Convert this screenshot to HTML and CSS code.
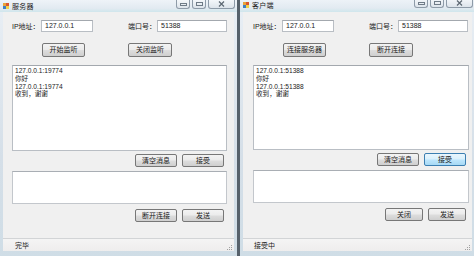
FILE: index.html
```html
<!doctype html>
<html lang="zh-CN">
<head>
  <meta charset="UTF-8">
  <title>服务器 / 客户端</title>
  <link rel="stylesheet" href="styles.css">
</head>
<body>
  <div class="desk">
    <section class="win win-server">
      <div class="titlebar">
        <svg class="app-icon" width="6" height="6" viewBox="0 0 6 6">
          <rect x="0" y="0" width="3" height="3" fill="#e8a33a"/>
          <rect x="3" y="0" width="3" height="3" fill="#d9552e"/>
          <rect x="0" y="3" width="3" height="3" fill="#3f7fc4"/>
          <rect x="3" y="3" width="3" height="3" fill="#f2d34b"/>
        </svg>
        <span class="title">服务器</span>
        <div class="caption">
          <span class="cap cap-min"><i></i></span>
          <span class="cap cap-max"><i></i></span>
          <span class="cap cap-close">
            <svg width="7" height="6" viewBox="0 0 7 6"><path d="M1 0.5 L6 5.5 M6 0.5 L1 5.5" stroke="#5d6873" stroke-width="1.2" fill="none"/></svg>
          </span>
        </div>
      </div>

      <div class="client">
        <div class="addr">
          <span class="lbl">IP地址：</span>
          <span class="field field-ip">127.0.0.1</span>
          <span class="lbl lbl-port">端口号：</span>
          <span class="field field-port">51388</span>
        </div>

        <div class="actions">
          <button class="btn">开始监听</button>
          <button class="btn btn-wide">关闭监听</button>
        </div>

        <div class="log">127.0.0.1:19774<br>你好<br>127.0.0.1:19774<br>收到，谢谢</div>

        <div class="tools">
          <button class="btn">清空消息</button>
          <button class="btn">接受</button>
        </div>

        <div class="msg"></div>

        <div class="tools tools-send">
          <button class="btn">断开连接</button>
          <button class="btn">发送</button>
        </div>

        <div class="status">
          <span>完毕</span>
          <svg class="grip" width="5" height="5" viewBox="0 0 5 5">
            <rect x="4" y="0" width="1" height="1" fill="#a0a0a0"/>
            <rect x="2" y="2" width="1" height="1" fill="#a0a0a0"/>
            <rect x="4" y="2" width="1" height="1" fill="#a0a0a0"/>
            <rect x="0" y="4" width="1" height="1" fill="#a0a0a0"/>
            <rect x="2" y="4" width="1" height="1" fill="#a0a0a0"/>
            <rect x="4" y="4" width="1" height="1" fill="#a0a0a0"/>
          </svg>
        </div>
      </div>
    </section>

    <section class="win win-client">
      <div class="titlebar">
        <svg class="app-icon" width="6" height="6" viewBox="0 0 6 6">
          <rect x="0" y="0" width="3" height="3" fill="#e8a33a"/>
          <rect x="3" y="0" width="3" height="3" fill="#d9552e"/>
          <rect x="0" y="3" width="3" height="3" fill="#3f7fc4"/>
          <rect x="3" y="3" width="3" height="3" fill="#f2d34b"/>
        </svg>
        <span class="title">客户端</span>
        <div class="caption">
          <span class="cap cap-min"><i></i></span>
          <span class="cap cap-max"><i></i></span>
          <span class="cap cap-close">
            <svg width="7" height="6" viewBox="0 0 7 6"><path d="M1 0.5 L6 5.5 M6 0.5 L1 5.5" stroke="#5d6873" stroke-width="1.2" fill="none"/></svg>
          </span>
        </div>
      </div>

      <div class="client">
        <div class="addr">
          <span class="lbl">IP地址：</span>
          <span class="field field-ip">127.0.0.1</span>
          <span class="lbl lbl-port">端口号：</span>
          <span class="field field-port">51388</span>
        </div>

        <div class="actions">
          <button class="btn">连接服务器</button>
          <button class="btn btn-wide">断开连接</button>
        </div>

        <div class="log">127.0.0.1:51388<br>你好<br>127.0.0.1:51388<br>收到，谢谢</div>

        <div class="tools">
          <button class="btn">清空消息</button>
          <button class="btn btn-focus">接受</button>
        </div>

        <div class="msg"></div>

        <div class="tools tools-send">
          <button class="btn btn-short">关闭</button>
          <button class="btn btn-short">发送</button>
        </div>

        <div class="status">
          <span>接受中</span>
          <svg class="grip" width="5" height="5" viewBox="0 0 5 5">
            <rect x="4" y="0" width="1" height="1" fill="#a0a0a0"/>
            <rect x="2" y="2" width="1" height="1" fill="#a0a0a0"/>
            <rect x="4" y="2" width="1" height="1" fill="#a0a0a0"/>
            <rect x="0" y="4" width="1" height="1" fill="#a0a0a0"/>
            <rect x="2" y="4" width="1" height="1" fill="#a0a0a0"/>
            <rect x="4" y="4" width="1" height="1" fill="#a0a0a0"/>
          </svg>
        </div>
      </div>
    </section>
  </div>
</body>
</html>
```

FILE: styles.css
```css
*{
  box-sizing: border-box;
}

html, body{
  margin: 0;
  padding: 0;
}

body{
  width: 474px;
  height: 256px;
  overflow: hidden;
  color: #1a1a1a;
  font-family: "Liberation Sans", "Noto Sans CJK SC", sans-serif;
  font-size: 7px;
  background: #56616b;
}

.desk{
  display: flex;
  gap: 3px;
  height: 256px;
}

/* window frame */

.win{
  display: flex;
  flex: none;
  flex-direction: column;
  width: 237px;
  height: 262px;
  padding: 0 3px;
  background: linear-gradient(#e9eff5, #d5dfe8 60%, #cfdde6);
}

.win-client{
  width: 235px;
  margin-top: -1px;
}

.titlebar{
  display: flex;
  align-items: center;
  height: 12px;
  margin: 0 -3px;
  padding-left: 3px;
  background: linear-gradient(#eef3f8, #e2eaf1 70%, #cfe6ec);
}

.win-client .titlebar{
  height: 13px;
}

.app-icon{
  flex: none;
  margin-top: -1px;
}

.title{
  margin-left: 3px;
  margin-top: -1px;
  color: #222;
  font-size: 7px;
  letter-spacing: .2px;
}

.caption{
  display: flex;
  align-self: flex-start;
  gap: 2px;
  margin-left: auto;
  margin-right: 2px;
}

.cap{
  display: flex;
  align-items: center;
  justify-content: center;
  width: 14px;
  height: 9px;
  border: 1px solid #8e9ba8;
  border-top: none;
  border-radius: 0 0 3px 3px;
  background: linear-gradient(#f4f7fa, #dde4eb);
}

.cap i{
  display: block;
  width: 7px;
  height: 4px;
  border: 1px solid #6f7b87;
}

.cap-min i{
  height: 3px;
  margin-top: 1px;
}

.cap-close{
  width: 27px;
}

/* client area */

.client{
  display: flex;
  flex: none;
  flex-direction: column;
  width: 231px;
  height: 239px;
  background: #f0f0f0;
}

.win-client .client{
  width: 229px;
  padding-left: 1px;
}

.addr{
  display: flex;
  align-items: center;
  height: 12px;
  margin-top: 8px;
  padding-left: 9px;
}

.lbl{
  flex: none;
  width: 29px;
  font-size: 7px;
}

.lbl-port{
  margin-left: 35px;
}

.field{
  flex: none;
  height: 12px;
  padding-left: 3px;
  font-size: 7px;
  line-height: 10px;
  background: #fff;
  border: 1px solid #b9bec4;
  border-top-color: #a3a8ae;
}

.field-ip{
  width: 52px;
}

.field-port{
  width: 70px;
}

.btn{
  flex: none;
  width: 43px;
  height: 14px;
  margin: 0;
  padding: 0;
  color: #1a1a1a;
  font-family: "Liberation Sans", "Noto Sans CJK SC", sans-serif;
  font-size: 7px;
  line-height: 12px;
  background: linear-gradient(#f3f3f3, #ebebeb 48%, #dddddd 52%, #cfcfcf);
  border: 1px solid #777;
  border-radius: 2px;
}

.btn-wide{
  width: 44px;
}

.btn-focus{
  background: linear-gradient(#eaf6fd, #d9f0fc 48%, #bee6fd 52%, #a7d9f5);
  border-color: #3c7fb1;
}

.actions{
  display: flex;
  gap: 43px;
  height: 14px;
  margin-top: 11px;
  padding-left: 39px;
}

.log{
  width: 215px;
  height: 86px;
  margin: 8px 0 0 9px;
  padding: 1px 2px;
  font-size: 6.6px;
  line-height: 7.8px;
  background: #fff;
  border: 1px solid #b9bec4;
  border-top-color: #a3a8ae;
}

.win-client .log{
  width: 216px;
  height: 85px;
}

.tools{
  display: flex;
  justify-content: flex-end;
  gap: 5px;
  height: 13px;
  margin-top: 3px;
  padding-right: 10px;
}

.tools .btn{
  width: 42px;
  height: 13px;
  line-height: 11px;
}

.win-client .tools{
  padding-right: 6px;
}

.win-client .tools-send .btn-short{
  width: 38px;
}

.tools-send{
  margin-top: 5px;
}

.msg{
  width: 215px;
  height: 33px;
  margin: 4px 0 0 9px;
  background: #fff;
  border: 1px solid #c3c7cc;
  border-top-color: #a9aeb4;
}

.win-client .msg{
  width: 216px;
}

.status{
  display: flex;
  align-items: center;
  justify-content: space-between;
  height: 13px;
  margin-top: auto;
  padding: 0 2px 0 12px;
  font-size: 7px;
  background: linear-gradient(#f4f4f4, #eeeded);
  border-top: 1px solid #d2d4d6;
}

.win-client .status{
  margin-left: -1px;
  padding-left: 11px;
}

.grip{
  align-self: flex-end;
  margin-bottom: 1px;
}
```
